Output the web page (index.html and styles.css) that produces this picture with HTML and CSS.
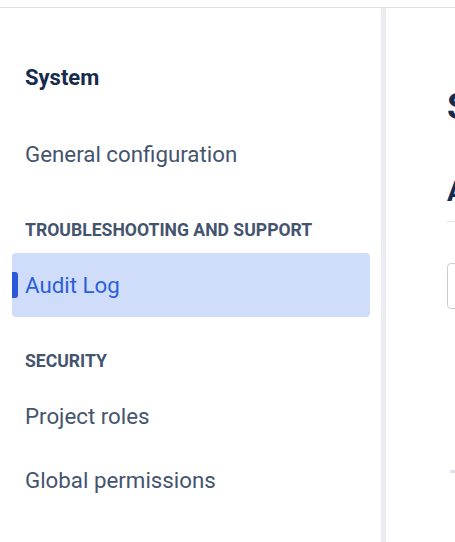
FILE: index.html
```html
<!DOCTYPE html>
<html lang="en">
<head>
<meta charset="utf-8">
<title>Audit Log</title>
<link rel="stylesheet" href="styles.css">
</head>
<body>
<div class="topbar"></div>
<div class="layout">
  <nav class="sidebar">
    <div class="sidebar-title">System</div>
    <a class="nav-item">General configuration</a>
    <div class="nav-heading">TROUBLESHOOTING AND SUPPORT</div>
    <a class="nav-item active">Audit Log</a>
    <div class="nav-heading">SECURITY</div>
    <a class="nav-item">Project roles</a>
    <a class="nav-item">Global permissions</a>
  </nav>
  <div class="divider"></div>
  <main class="main">
    <h1 class="page-title">System</h1>
    <h2 class="section-title">Audit log</h2>
    <div class="search-box"></div>
    <div class="skeleton"></div>
  </main>
</div>
</body>
</html>
```
FILE: styles.css
```css
html, body {
  margin: 0;
  padding: 0;
  height: 100%;
  overflow: hidden;
  background: #ffffff;
  font-family: Roboto, "Noto Sans", "Liberation Sans", sans-serif;
}

.topbar {
  height: 7px;
  border-bottom: 1px solid #dfe1e6;
}

.layout {
  display: flex;
  height: calc(100% - 8px);
}

.sidebar {
  width: 358px;
  flex: 0 0 358px;
  padding: 56px 11px 0 12px;
  display: flex;
  flex-direction: column;
}

.sidebar-title {
  font-size: 22px;
  font-weight: 700;
  line-height: 28px;
  color: #172b4d;
  padding-left: 13px;
  margin-bottom: 30px;
}

.nav-item {
  position: relative;
  display: block;
  height: 64px;
  line-height: 65px;
  font-size: 22.3px;
  color: #44546f;
  padding-left: 13px;
  border-radius: 4px;
  white-space: nowrap;
}

.nav-item.active {
  background: #cfddfa;
  color: #2c5fd9;
}

.nav-item.active::before {
  content: "";
  position: absolute;
  left: 0;
  top: 19px;
  width: 6px;
  height: 26px;
  background: #2a5ad8;
  border-radius: 0 3px 3px 0;
}

.nav-heading {
  font-size: 17.6px;
  font-weight: 700;
  line-height: 20px;
  color: #44546f;
  padding-left: 13px;
  margin: 34px 0 13px;
  white-space: nowrap;
}

.divider {
  flex: 0 0 5px;
  background: #ecedf2;
}

.main {
  flex: 1;
  min-width: 0;
  overflow: hidden;
  padding: 79px 0 0 61px;
  white-space: nowrap;
}

.page-title {
  margin: 0;
  font-size: 36px;
  line-height: 40px;
  font-weight: 700;
  color: #172b4d;
}

.section-title {
  margin: 49px 0 0;
  font-size: 28px;
  line-height: 32px;
  font-weight: 700;
  color: #172b4d;
  padding-bottom: 13px;
  border-bottom: 1px solid #dfe1e6;
}

.search-box {
  margin-top: 41px;
  height: 44px;
  width: 300px;
  border: 1px solid #c9ced6;
  border-radius: 4px;
}

.skeleton {
  margin: 161px 0 0 3px;
  height: 3px;
  width: 200px;
  background: #dfe1e6;
}
```
